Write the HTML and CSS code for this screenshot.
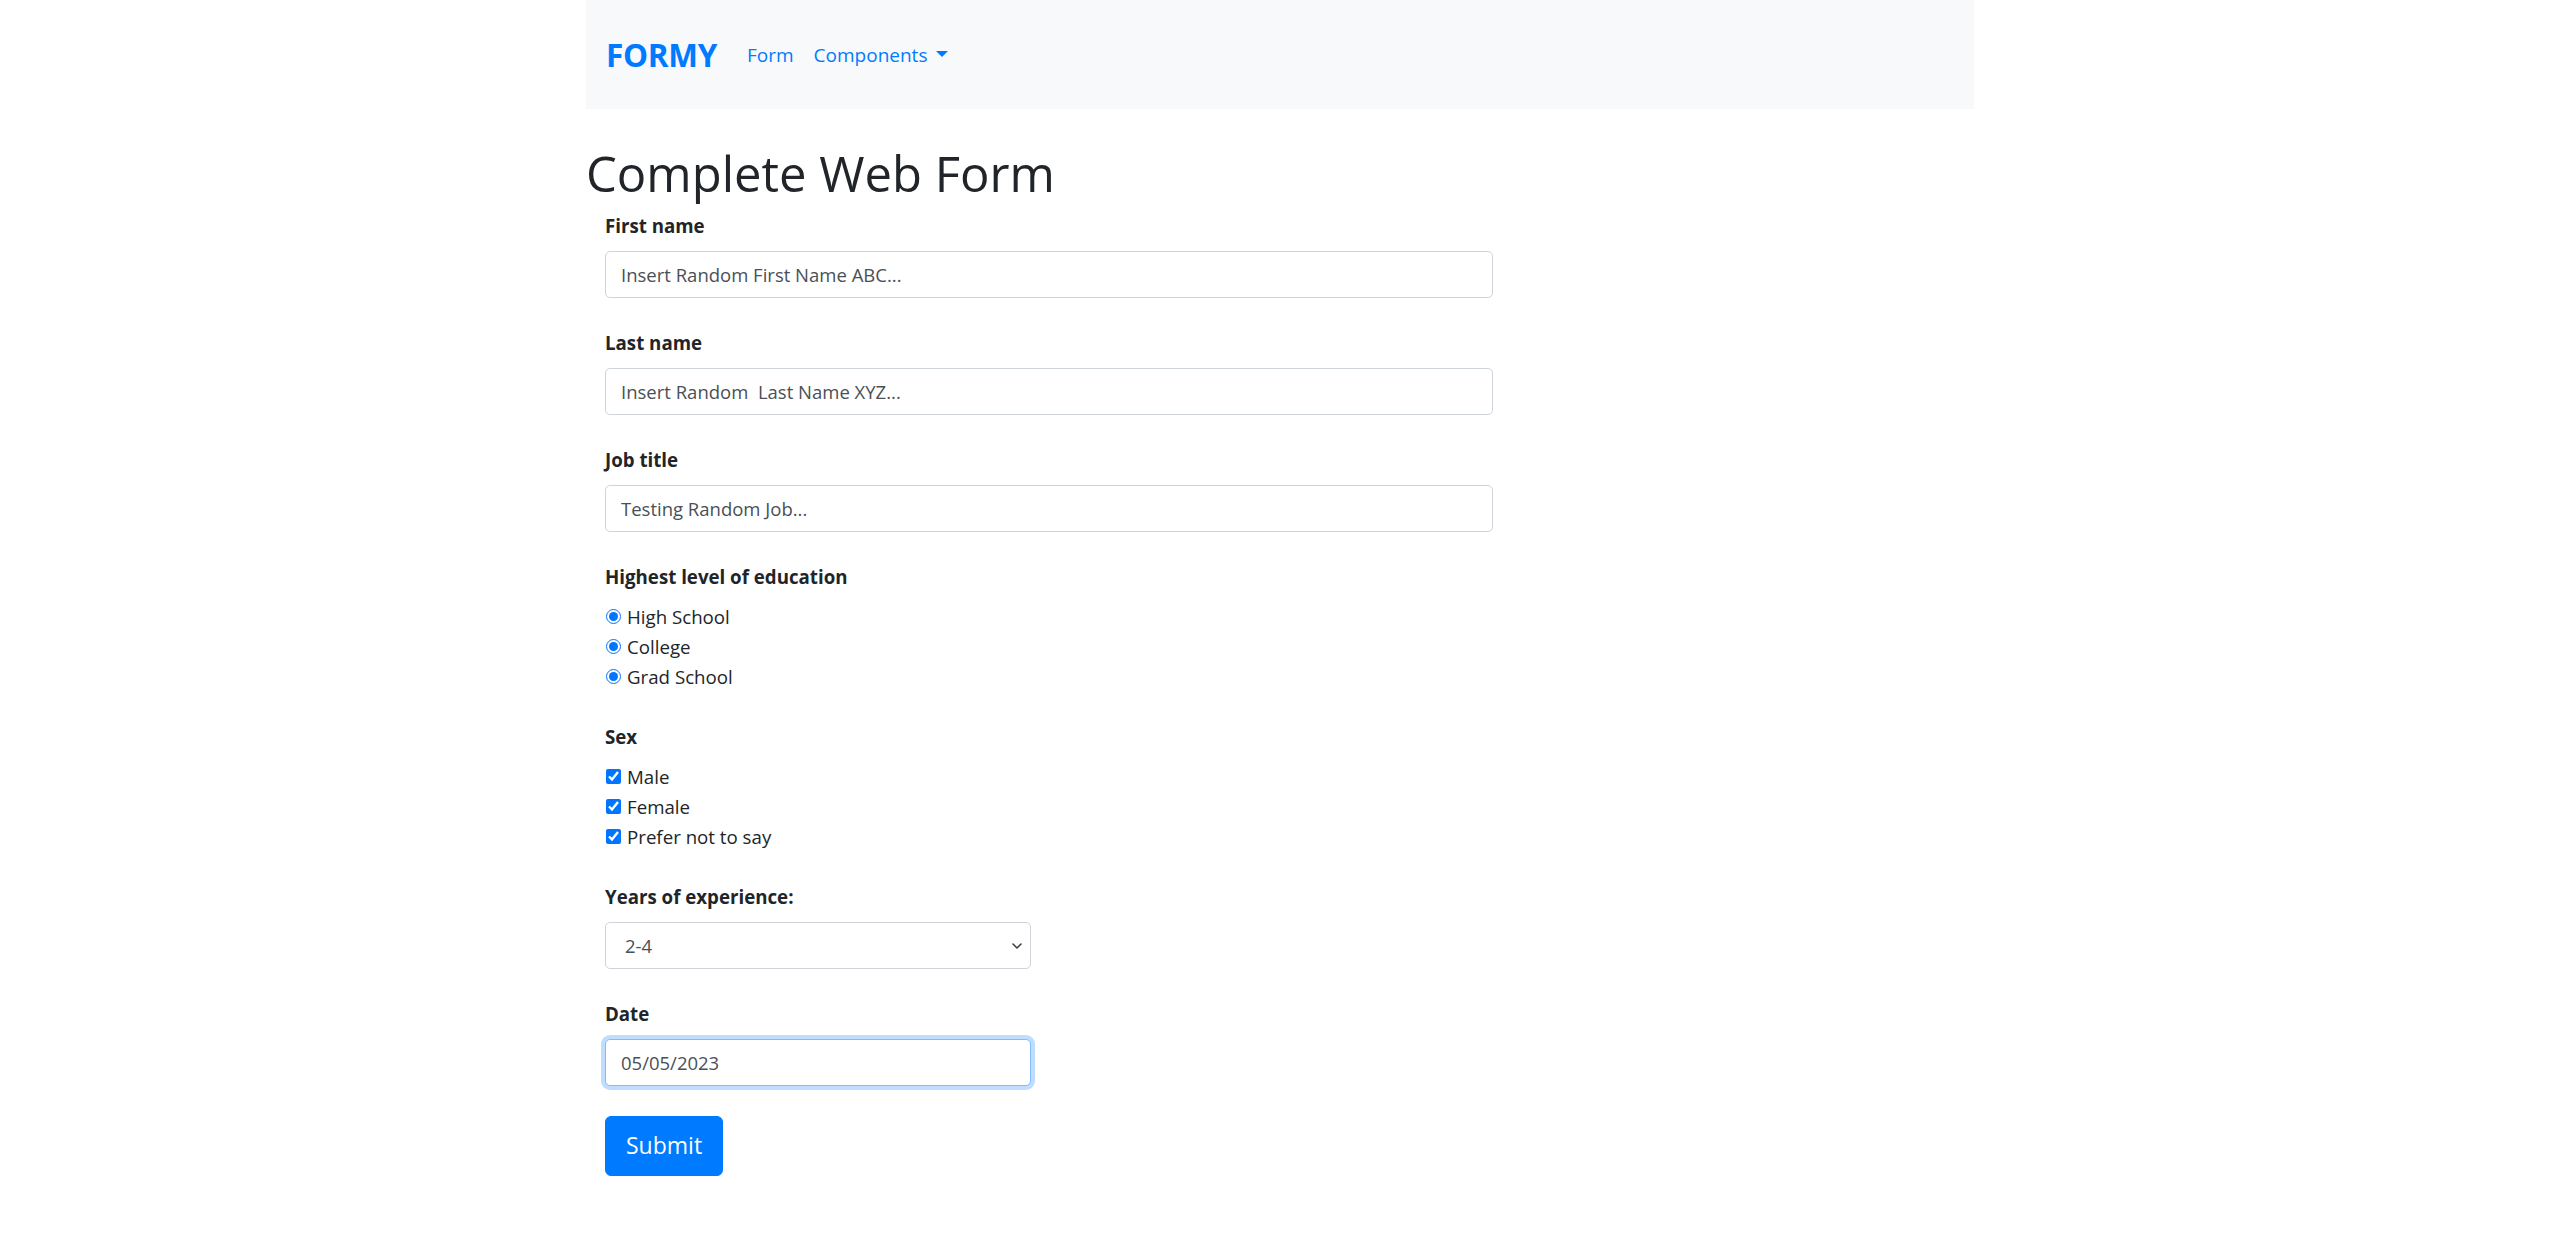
FILE: index.html
```html
<!DOCTYPE html>
<html lang="en">
<head>
    <meta charset="UTF-8">
    <meta name="viewport" content="width=device-width, initial-scale=1.0">
    <title>Formy</title>
    <link rel="stylesheet" href="styles.css">
</head>
<body>
    <div class="page">
        <nav class="navbar">
            <a class="brand" href="#">FORMY</a>
            <a class="nav-link" href="#">Form</a>
            <a class="nav-link" href="#">Components<span class="caret"></span></a>
        </nav>

        <h1>Complete Web Form</h1>

        <form class="web-form">
            <div class="form-group">
                <label class="field-label" for="first-name">First name</label>
                <input type="text" class="form-control" id="first-name" value="Insert Random First Name ABC...">
            </div>
            <div class="form-group">
                <label class="field-label" for="last-name">Last name</label>
                <input type="text" class="form-control" id="last-name" value="Insert Random  Last Name XYZ...">
            </div>
            <div class="form-group">
                <label class="field-label" for="job-title">Job title</label>
                <input type="text" class="form-control" id="job-title" value="Testing Random Job...">
            </div>
            <div class="form-group">
                <label class="field-label">Highest level of education</label>
                <div class="check"><input type="radio" id="radio-1" name="edu-1" checked><label for="radio-1">High School</label></div>
                <div class="check"><input type="radio" id="radio-2" name="edu-2" checked><label for="radio-2">College</label></div>
                <div class="check"><input type="radio" id="radio-3" name="edu-3" checked><label for="radio-3">Grad School</label></div>
            </div>
            <div class="form-group">
                <label class="field-label">Sex</label>
                <div class="check"><input type="checkbox" id="checkbox-1" checked><label for="checkbox-1">Male</label></div>
                <div class="check"><input type="checkbox" id="checkbox-2" checked><label for="checkbox-2">Female</label></div>
                <div class="check"><input type="checkbox" id="checkbox-3" checked><label for="checkbox-3">Prefer not to say</label></div>
            </div>
            <div class="form-group">
                <label class="field-label" for="select-menu">Years of experience:</label>
                <div class="select-wrap">
                    <select class="form-control narrow" id="select-menu">
                        <option value="0">Select an option</option>
                        <option value="1">0-1</option>
                        <option value="2" selected>2-4</option>
                        <option value="3">5-9</option>
                        <option value="4">10+</option>
                    </select>
                    <svg class="chevron" width="10" height="6" viewBox="0 0 10 6"><path d="M1 1l4 4 4-4" fill="none" stroke="#3c4043" stroke-width="1.6" stroke-linecap="round" stroke-linejoin="round"/></svg>
                </div>
            </div>
            <div class="form-group">
                <label class="field-label" for="datepicker">Date</label>
                <input type="text" class="form-control narrow focused" id="datepicker" value="05/05/2023">
            </div>
            <button type="button" class="btn-submit">Submit</button>
        </form>
    </div>
</body>
</html>
```

FILE: styles.css
```css
body {
    margin: 0;
    font-family: "Open Sans", "Noto Sans", Arial, sans-serif;
    font-size: 18.7px;
    line-height: 30px;
    color: #212529;
    background: #fff;
}
.page {
    width: 1388px;
    margin: 0 auto;
}
.navbar {
    height: 109px;
    background-color: #f8f9fa;
    display: flex;
    align-items: center;
    padding: 0 20px;
}
.navbar a {
    text-decoration: none;
    color: #007bff;
}
.brand {
    font-size: 31.5px;
    font-weight: 700;
    line-height: 44px;
    margin: 1px 20px 0 0;
    letter-spacing: -0.3px;
}
.nav-link {
    padding: 0 10px;
    font-size: 19px;
    line-height: 30px;
}
.caret {
    display: inline-block;
    margin-left: 9px;
    vertical-align: 5px;
    border-top: 6px solid #007bff;
    border-left: 6px solid transparent;
    border-right: 6px solid transparent;
}
h1 {
    font-size: 49px;
    font-weight: 500;
    line-height: 58px;
    margin: 35px 0 9px;
}
.web-form {
    padding-left: 19px;
}
.form-group {
    margin-bottom: 30px;
}
.field-label {
    display: block;
    font-weight: 700;
    margin-bottom: 10px;
}
.form-control {
    display: block;
    box-sizing: border-box;
    width: 888px;
    height: 47px;
    padding: 7px 15px;
    font-family: inherit;
    font-size: 18.5px;
    line-height: 30px;
    color: #495057;
    background: #fff;
    border: 1px solid #ced4da;
    border-radius: 5px;
    outline: none;
}
.form-control.narrow {
    width: 426px;
}
.select-wrap {
    position: relative;
    width: 426px;
}
select.form-control {
    appearance: none;
    -webkit-appearance: none;
    padding: 7px 19px;
}
.chevron {
    position: absolute;
    right: 9px;
    top: 21px;
    pointer-events: none;
}
.form-control.focused {
    border-color: #80bdff;
    box-shadow: 0 0 0 4px rgba(0, 123, 255, 0.25);
}
.check {
    line-height: 30px;
}
.check input {
    width: 15px;
    height: 15px;
    margin: 0 6px 0 1px;
    vertical-align: baseline;
    accent-color: #0075ff;
}
.btn-submit {
    font-family: inherit;
    font-size: 23px;
    line-height: 37.5px;
    padding: 10px 20px;
    color: #fff;
    background-color: #007bff;
    border: 1px solid #007bff;
    border-radius: 6px;
    cursor: pointer;
}
```
